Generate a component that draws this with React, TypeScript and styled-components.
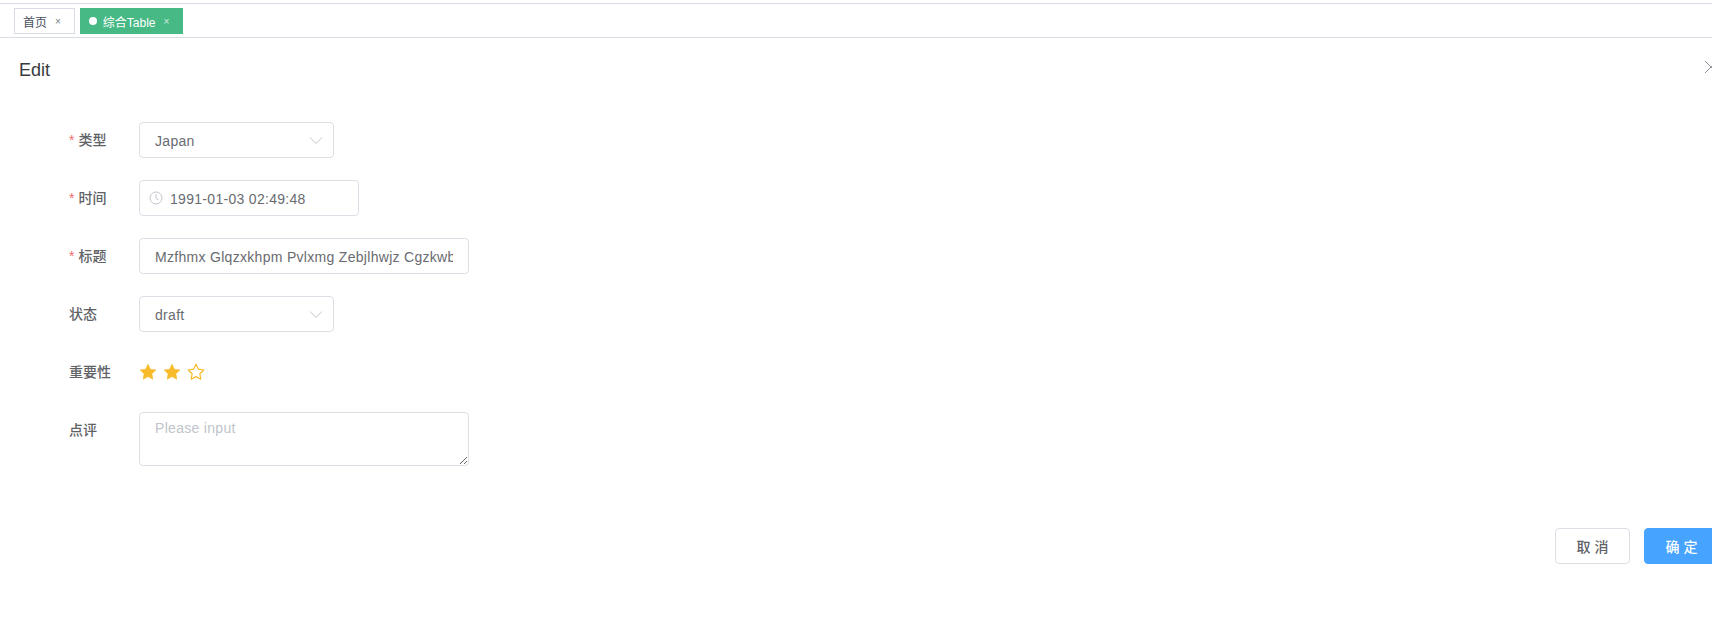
import React from 'react';
import styled, { createGlobalStyle } from 'styled-components';

const GlobalStyle = createGlobalStyle`
  html, body {
    margin: 0;
    padding: 0;
    height: 100%;
    overflow: hidden;
    background: #fff;
  }
  body {
    font-family: "Liberation Sans", "Noto Sans CJK SC", sans-serif;
    -webkit-font-smoothing: antialiased;
  }
  * {
    box-sizing: border-box;
  }
`;

const Page = styled.div`
  width: 1712px;
  height: 640px;
  overflow: hidden;
  padding-top: 3px;
`;

const TagsBar = styled.div`
  height: 35px;
  display: flex;
  align-items: center;
  gap: 5px;
  padding: 1px 0 0 14px;
  border-top: 1px solid #d8dce5;
  border-bottom: 1px solid #d8dce5;
`;

const Tag = styled.div<{ $active?: boolean }>`
  height: 26px;
  display: flex;
  align-items: center;
  padding: 0 8px;
  font-size: 12px;
  color: ${({ $active }) => ($active ? '#fff' : '#495060')};
  background: ${({ $active }) => ($active ? '#46b985' : '#fff')};
  border: 1px solid ${({ $active }) => ($active ? '#46b985' : '#d8dce5')};
`;

const TagDot = styled.span`
  width: 8px;
  height: 8px;
  border-radius: 50%;
  background: #fff;
  margin-right: 6px;
`;

const TagClose = styled.span`
  font-size: 10px;
  margin-left: 8px;
  margin-right: 5px;
  opacity: 0.75;
`;

const Dialog = styled.div`
  width: 1739px;
`;

const DialogHeader = styled.div`
  display: flex;
  justify-content: space-between;
  align-items: flex-start;
  padding: 20px 20px 0 19px;
  height: 59px;
`;

const DialogTitle = styled.span`
  font-size: 18px;
  line-height: 24px;
  color: #3a3b3e;
`;

const CloseIcon = styled.svg`
  width: 16px;
  height: 16px;
  stroke: #909399;
  fill: none;
  margin-top: 1px;
`;

const Form = styled.form`
  display: flex;
  flex-direction: column;
  gap: 22px;
  padding: 25px 0 0 69px;
`;

const Row = styled.div`
  display: flex;
  min-height: 36px;
`;

const Label = styled.label`
  width: 70px;
  flex: none;
  font-size: 14px;
  line-height: 36px;
  font-weight: 500;
  color: #606266;
`;

const Required = styled.span`
  color: #f56c6c;
  margin-right: 4px;
  font-weight: 400;
`;

const FieldBox = styled.div<{ $width: number; $withIcon?: boolean }>`
  position: relative;
  width: ${({ $width }) => $width}px;
  height: 36px;
  padding: 0 15px 0 ${({ $withIcon }) => ($withIcon ? '30px' : '15px')};
  border: 1px solid #dcdfe6;
  border-radius: 4px;
  background: #fff;
`;

const TextInput = styled.input`
  display: block;
  width: 100%;
  height: 34px;
  padding: 1px 0 0;
  border: 0;
  outline: none;
  font: inherit;
  font-size: 14px;
  letter-spacing: 0.3px;
  color: #696b70;
  background: transparent;
`;

const SuffixIcon = styled.svg`
  position: absolute;
  top: 10px;
  right: 10px;
  width: 14px;
  height: 14px;
  fill: none;
  stroke: #c0c4cc;
  stroke-width: 1;
`;

const PrefixIcon = styled.svg`
  position: absolute;
  top: 10px;
  left: 9px;
  width: 14px;
  height: 14px;
  fill: none;
  stroke: #c0c4cc;
  stroke-width: 1;
`;

const Stars = styled.div`
  display: flex;
  align-items: center;
  height: 36px;
`;

const StarIcon = styled.svg<{ $on: boolean }>`
  width: 18px;
  height: 18px;
  margin-right: 6px;
  fill: ${({ $on }) => ($on ? '#f7ba2a' : '#fff')};
  stroke: #f7ba2a;
  stroke-width: ${({ $on }) => ($on ? 0.6 : 1.2)};
  stroke-linejoin: round;
`;

const TextArea = styled.textarea`
  display: block;
  width: 330px;
  height: 54px;
  padding: 5px 15px;
  border: 1px solid #dcdfe6;
  border-radius: 4px;
  outline: none;
  font: inherit;
  font-size: 14px;
  letter-spacing: 0.3px;
  line-height: 1.5;
  color: #696b70;

  &::placeholder {
    color: #c0c4cc;
  }
`;

const Footer = styled.div`
  display: flex;
  justify-content: flex-end;
  gap: 14px;
  padding: 62px 20px 0 0;
`;

const Button = styled.button<{ $primary?: boolean }>`
  width: 75px;
  height: 36px;
  padding: 0;
  border-radius: 4px;
  border: 1px solid ${({ $primary }) => ($primary ? '#46a3ff' : '#dcdfe6')};
  background: ${({ $primary }) => ($primary ? '#46a3ff' : '#fff')};
  color: ${({ $primary }) => ($primary ? '#fff' : '#606266')};
  font: inherit;
  font-size: 14px;
  font-weight: 500;
`;

const Chevron = () => (
  <SuffixIcon viewBox="0 0 14 14">
    <path d="M1 4.5 7 10.5 13 4.5" />
  </SuffixIcon>
);

const Star = ({ on }: { on: boolean }) => (
  <StarIcon $on={on} viewBox="0 0 18 18">
    <path d="M9 1.2 11.4 6.2 16.8 7 12.9 10.8 13.8 16.2 9 13.6 4.2 16.2 5.1 10.8 1.2 7 6.6 6.2Z" />
  </StarIcon>
);

const App: React.FC = () => (
  <Page>
    <GlobalStyle />
    <TagsBar>
      <Tag>
        首页
        <TagClose>×</TagClose>
      </Tag>
      <Tag $active>
        <TagDot />
        综合Table
        <TagClose>×</TagClose>
      </Tag>
    </TagsBar>
    <Dialog>
      <DialogHeader>
        <DialogTitle>Edit</DialogTitle>
        <CloseIcon viewBox="0 0 16 16">
          <path d="M2 2 14 14M14 2 2 14" />
        </CloseIcon>
      </DialogHeader>
      <Form>
        <Row>
          <Label>
            <Required>*</Required>类型
          </Label>
          <FieldBox $width={195}>
            <TextInput readOnly value="Japan" />
            <Chevron />
          </FieldBox>
        </Row>
        <Row>
          <Label>
            <Required>*</Required>时间
          </Label>
          <FieldBox $width={220} $withIcon>
            <TextInput readOnly value="1991-01-03 02:49:48" />
            <PrefixIcon viewBox="0 0 14 14">
              <circle cx="7" cy="7" r="6" />
              <path d="M7 3.2V7.4L9.6 9" />
            </PrefixIcon>
          </FieldBox>
        </Row>
        <Row>
          <Label>
            <Required>*</Required>标题
          </Label>
          <FieldBox $width={330}>
            <TextInput readOnly value="Mzfhmx Glqzxkhpm Pvlxmg Zebjlhwjz Cgzkwb" />
          </FieldBox>
        </Row>
        <Row>
          <Label>状态</Label>
          <FieldBox $width={195}>
            <TextInput readOnly value="draft" />
            <Chevron />
          </FieldBox>
        </Row>
        <Row>
          <Label>重要性</Label>
          <Stars>
            <Star on />
            <Star on />
            <Star on={false} />
          </Stars>
        </Row>
        <Row>
          <Label>点评</Label>
          <TextArea placeholder="Please input" />
        </Row>
      </Form>
      <Footer>
        <Button type="button">取 消</Button>
        <Button type="button" $primary>
          确 定
        </Button>
      </Footer>
    </Dialog>
  </Page>
);

export default App;
